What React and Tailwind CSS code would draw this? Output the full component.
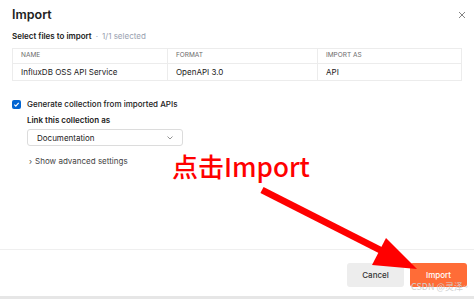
import React from "react";

const Arrow = () => (
  <svg className="absolute left-0 top-0 pointer-events-none" width="474" height="299">
    <line x1="262" y1="190" x2="392" y2="256" stroke="#ff0000" strokeWidth="7" />
    <polygon points="417,269 386,238 372,265" fill="#ff0000" />
  </svg>
);

const App = () => {
  return (
    <div className="relative w-[474px] h-[299px] bg-white overflow-hidden font-['Inter',sans-serif] text-[#212121]">
      <div className="flex items-center justify-between pl-3 pr-[8px] pt-[4px] h-[26px]">
        <p className="text-[12.5px] font-semibold">Import</p>
        <svg width="8" height="8" viewBox="0 0 8 8">
          <path d="M1 1 L7 7 M7 1 L1 7" stroke="#777" strokeWidth="0.9" />
        </svg>
      </div>

      <div className="px-3 mt-[4px] flex items-center gap-[4px] text-[8px]">
        <span className="font-semibold">Select files to import</span>
        <span className="text-gray-400">·</span>
        <span className="text-gray-400">1/1 selected</span>
      </div>

      <div className="mx-3 mt-[6px] border border-[#ececec] text-[8px]">
        <div className="grid grid-cols-[155px_150px_1fr] h-[15px] border-b border-[#ececec] text-[6.5px] text-[#6b6b6b] uppercase">
          <div className="px-2 flex items-center border-r border-[#ececec]">Name</div>
          <div className="px-2 flex items-center border-r border-[#ececec]">Format</div>
          <div className="px-2 flex items-center">Import as</div>
        </div>
        <div className="grid grid-cols-[155px_150px_1fr] h-[16px]">
          <div className="px-2 flex items-center border-r border-[#ececec]">InfluxDB OSS API Service</div>
          <div className="px-2 flex items-center border-r border-[#ececec]">OpenAPI 3.0</div>
          <div className="px-2 flex items-center">API</div>
        </div>
      </div>

      <div className="px-3 mt-[17px] flex items-center gap-[6px] text-[8px]">
        <div className="w-[9px] h-[9px] rounded-[2px] bg-[#0265d2] flex items-center justify-center">
          <svg width="7" height="7" viewBox="0 0 8 8">
            <path d="M1.5 4.2 L3.2 5.8 L6.5 2.2" stroke="white" strokeWidth="1.4" fill="none" />
          </svg>
        </div>
        <span className="font-medium">Generate collection from imported APIs</span>
      </div>

      <div className="pl-[27px] mt-[4px] text-[8px] font-semibold">Link this collection as</div>

      <div className="ml-[27px] mt-[3px] w-[156px] h-[17px] border border-[#dcdcdc] rounded-[3px] flex items-center justify-between px-[9px] text-[8px]">
        <span>Documentation</span>
        <svg width="6" height="4" viewBox="0 0 6 4">
          <path d="M0.5 0.5 L3 3 L5.5 0.5" stroke="#888" strokeWidth="0.9" fill="none" />
        </svg>
      </div>

      <div className="pl-[29px] mt-[9px] flex items-center gap-[3px] text-[8px] text-[#444]">
        <span className="text-[8px]">›</span>
        <span>Show advanced settings</span>
      </div>

      <p className="absolute left-[172px] top-[153px] text-[26px] leading-none text-[#ff0000] font-['Noto_Sans_CJK_SC',sans-serif] font-medium">
        点击Import
      </p>

      <div className="absolute left-0 right-0 top-[249px] border-t border-[#efefef]" />

      <div className="absolute right-[7px] top-[263px] flex gap-[6px] text-[8px] font-medium">
        <div className="w-[57px] h-[24px] rounded-[3px] bg-[#ededed] text-[#333] flex items-center justify-center">Cancel</div>
        <div className="w-[57px] h-[24px] rounded-[3px] bg-[#ff6c37] text-white flex items-center justify-center">Import</div>
      </div>

      <p className="absolute right-[6px] top-[280px] text-[9px] text-[#d0d0d0] font-['Noto_Sans_CJK_SC',sans-serif]">CSDN @灵泽~</p>

      <div className="absolute left-0 right-0 bottom-0 h-[3px] bg-[#e6e6e6]" />

      <Arrow />
    </div>
  );
};

export default App;
